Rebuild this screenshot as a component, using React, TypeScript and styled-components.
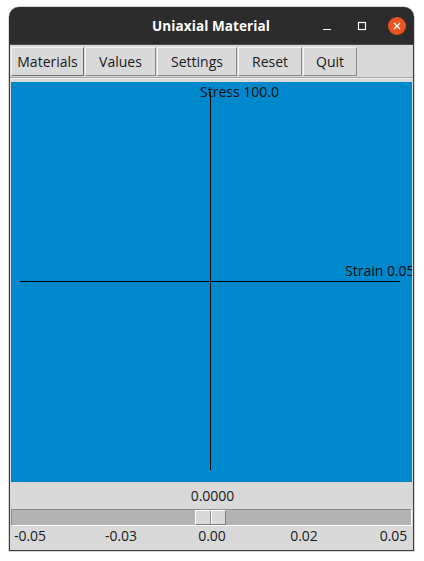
import React from "react";
import styled, { createGlobalStyle } from "styled-components";

const Global = createGlobalStyle`
  html, body {
    margin: 0;
    padding: 0;
    background: #ffffff;
  }
  body {
    font-family: "Open Sans", "Noto Sans", "DejaVu Sans", sans-serif;
  }
`;

const Page = styled.div`
  width: 424px;
  height: 561px;
  padding: 7px 0 0 9px;
  box-sizing: border-box;
`;

const Window = styled.div`
  width: 405px;
  height: 544px;
  display: flex;
  flex-direction: column;
  border-radius: 10px 10px 0 0;
  overflow: hidden;
  background: #d9d9d9;
  box-shadow: 0 0 0 0.5px rgba(0, 0, 0, 0.3);
`;

const TitleBar = styled.div`
  height: 37px;
  flex: none;
  background: #2c2c2c;
  color: #ffffff;
  display: grid;
  grid-template-columns: 1fr auto 1fr;
  align-items: center;
  border-bottom: 1px solid #4a4a4a;
`;

const Title = styled.div`
  grid-column: 2;
  font-weight: 700;
  font-size: 13.5px;
  letter-spacing: 0.1px;
  padding-right: 1px;
`;

const Controls = styled.div`
  grid-column: 3;
  justify-self: end;
  display: flex;
  align-items: center;
  gap: 17px;
  padding-right: 8px;
`;

const Ctrl = styled.div`
  width: 18px;
  height: 18px;
  display: flex;
  align-items: center;
  justify-content: center;
`;

const Close = styled(Ctrl)`
  border-radius: 50%;
  background: #e95420;
`;

const Body = styled.div`
  flex: 1;
  display: flex;
  flex-direction: column;
  border: 1px solid #3a3a3a;
  border-top: none;
`;

const Toolbar = styled.div`
  display: flex;
  gap: 1px;
  padding: 2px 0 0 1px;
  height: 30px;
  border-bottom: 1px solid #a3a3a3;
  box-shadow: 0 1px 0 #f2f2f2;
`;

const ToolButton = styled.button<{ $w: number; $active?: boolean }>`
  width: ${({ $w }) => $w}px;
  height: 29px;
  padding: 0;
  background: #d9d9d9;
  color: #1a1a1a;
  font-family: "Open Sans", "Noto Sans", "DejaVu Sans", sans-serif;
  font-size: 14px;
  border: 1px solid;
  border-color: ${({ $active }) =>
    $active
      ? "#f4f4f4 #6e6e6e #6e6e6e #f4f4f4"
      : "#f4f4f4 #8a8a8a #8a8a8a #f4f4f4"};
  cursor: pointer;
`;

const CanvasWrap = styled.div`
  margin: 4px 0 0 1px;
  width: 401px;
  height: 400px;
  background: #0088cc;
`;

const ScaleArea = styled.div`
  display: flex;
  flex-direction: column;
  padding: 4px 1px 0 1px;
`;

const ScaleValue = styled.div`
  text-align: center;
  font-size: 14px;
  color: #1a1a1a;
  line-height: 19px;
  padding-left: 2px;
`;

const Trough = styled.div`
  margin-top: 4px;
  height: 15px;
  background: #b3b3b3;
  border: 1px solid;
  border-color: #8c8c8c #ffffff #ffffff #8c8c8c;
  display: flex;
  justify-content: center;
`;

const Handle = styled.div`
  width: 31px;
  height: 15px;
  margin-right: 2px;
  display: flex;
  box-sizing: border-box;
  border: 1px solid;
  border-color: #ffffff #7f7f7f #7f7f7f #ffffff;
  background: #d9d9d9;
`;

const HandleHalf = styled.div`
  flex: 1;
  & + & {
    border-left: 1px solid #ffffff;
  }
  &:first-child {
    border-right: 1px solid #8c8c8c;
  }
`;

const Ticks = styled.div`
  display: grid;
  grid-template-columns: 38px 144px 38px 146px 33px;
  font-size: 14px;
  line-height: 20px;
  color: #1a1a1a;
  text-align: center;
  white-space: nowrap;
`;

const Tick = styled.span`
  justify-self: center;
`;

const buttons: [string, number][] = [
  ["Materials", 73],
  ["Values", 71],
  ["Settings", 80],
  ["Reset", 64],
  ["Quit", 54],
];

const ticks = ["-0.05", "-0.03", "0.00", "0.02", "0.05"];

const Chart = () => (
  <svg width="401" height="400" style={{ display: "block" }}>
    <line x1="199.5" y1="10" x2="199.5" y2="388" stroke="#000" strokeWidth="1" />
    <line x1="9" y1="199.5" x2="389" y2="199.5" stroke="#000" strokeWidth="1" />
    <text
      x="189"
      y="15"
      fontFamily="Open Sans, Noto Sans, sans-serif"
      fontSize="14"
      fill="#0d0d0d"
    >
      Stress 100.0
    </text>
    <text
      x="334"
      y="194"
      fontFamily="Open Sans, Noto Sans, sans-serif"
      fontSize="14"
      fill="#0d0d0d"
    >
      Strain 0.05
    </text>
  </svg>
);

export default function App() {
  return (
    <>
      <Global />
      <Page>
        <Window>
          <TitleBar>
            <Title>Uniaxial Material</Title>
            <Controls>
              <Ctrl>
                <svg width="10" height="10" viewBox="0 0 10 10">
                  <line x1="1" y1="8.5" x2="9" y2="8.5" stroke="#fff" strokeWidth="1.2" />
                </svg>
              </Ctrl>
              <Ctrl>
                <svg width="10" height="10" viewBox="0 0 10 10">
                  <rect x="1.5" y="1.5" width="7" height="7" fill="none" stroke="#fff" strokeWidth="1.2" />
                </svg>
              </Ctrl>
              <Close>
                <svg width="10" height="10" viewBox="0 0 10 10">
                  <path d="M2 2 L8 8 M8 2 L2 8" stroke="#fff" strokeWidth="1.4" />
                </svg>
              </Close>
            </Controls>
          </TitleBar>
          <Body>
            <Toolbar>
              {buttons.map(([label, w], i) => (
                <ToolButton key={label} $w={w} $active={i === 0}>
                  {label}
                </ToolButton>
              ))}
            </Toolbar>
            <CanvasWrap>
              <Chart />
            </CanvasWrap>
            <ScaleArea>
              <ScaleValue>0.0000</ScaleValue>
              <Trough>
                <Handle>
                  <HandleHalf />
                  <HandleHalf />
                </Handle>
              </Trough>
              <Ticks>
                {ticks.map((t) => (
                  <Tick key={t}>{t}</Tick>
                ))}
              </Ticks>
            </ScaleArea>
          </Body>
        </Window>
      </Page>
    </>
  );
}
